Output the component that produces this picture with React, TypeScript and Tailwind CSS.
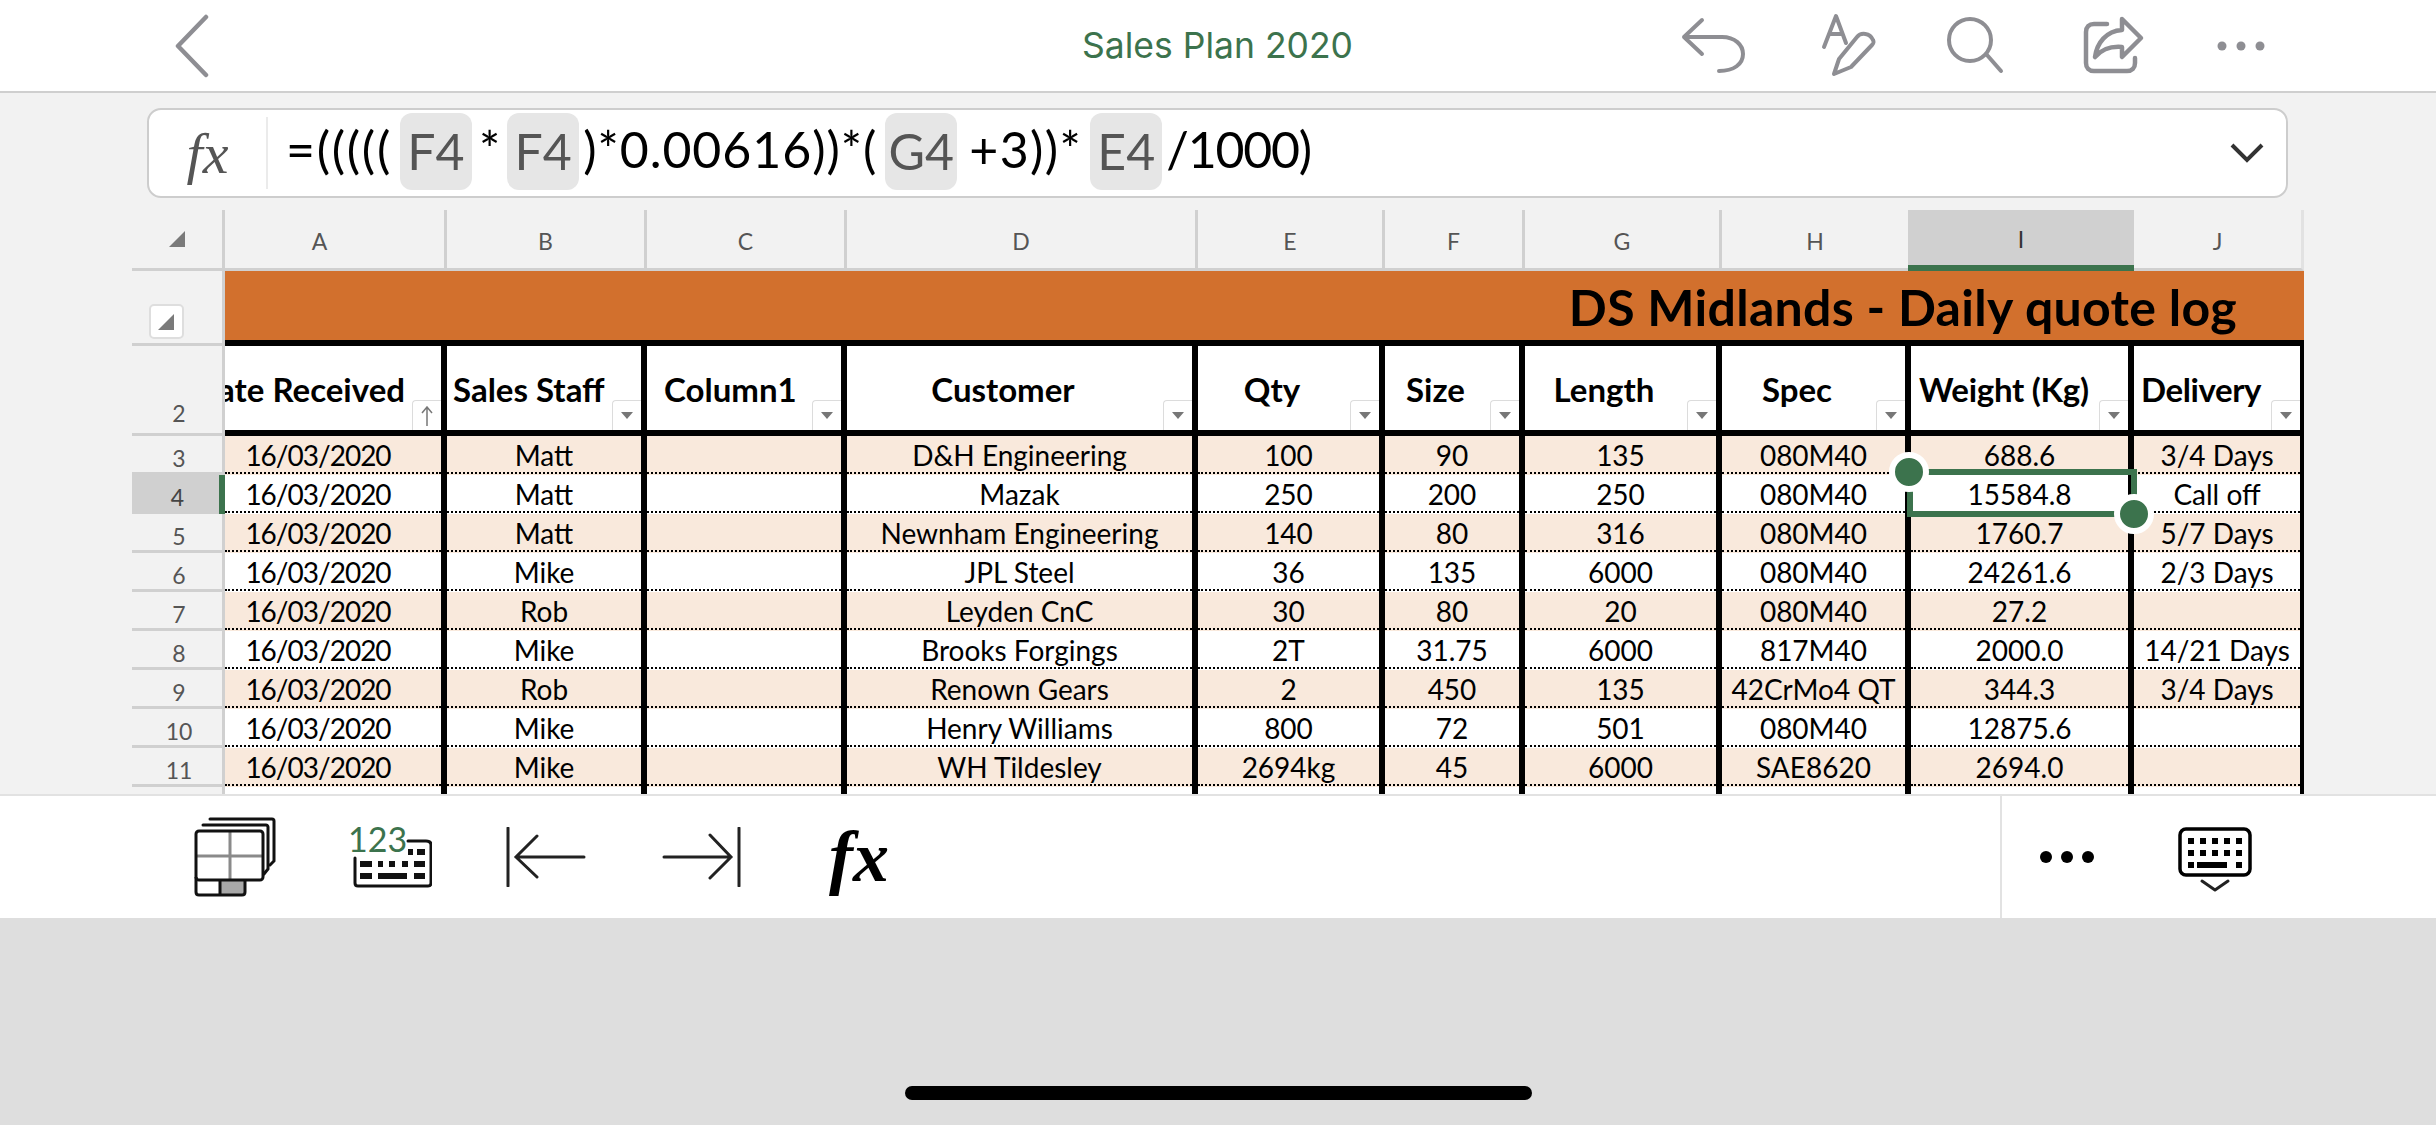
import React from 'react';

const GRID = 'grid grid-cols-[93px_222px_200px_200px_351px_187px_140px_197px_189px_223px_170px]';
const GREEN = '#3c734d';

const colLetters = ['A', 'B', 'C', 'D', 'E', 'F', 'G', 'H', 'I', 'J'];

const headers = [
    { label: 'Date Received', cls: 'justify-end pr-[36px]' },
    { label: 'Sales Staff', cls: 'justify-start pl-[6px]' },
    { label: 'Column1', cls: 'justify-start pl-[17px]' },
    { label: 'Customer', cls: 'justify-center pr-[33px]' },
    { label: 'Qty', cls: 'justify-center pr-[33px]' },
    { label: 'Size', cls: 'justify-center pr-[33px]' },
    { label: 'Length', cls: 'justify-center pr-[33px]' },
    { label: 'Spec', cls: 'justify-center pr-[33px]' },
    { label: 'Weight (Kg)', cls: 'justify-start pl-[8px] tracking-[-0.3px]' },
    { label: 'Delivery', cls: 'justify-start pl-[7px] tracking-[-0.4px]' },
];

const rows = [
    ['Matt', 'D&H Engineering', '100', '90', '135', '080M40', '688.6', '3/4 Days'],
    ['Matt', 'Mazak', '250', '200', '250', '080M40', '15584.8', 'Call off'],
    ['Matt', 'Newnham Engineering', '140', '80', '316', '080M40', '1760.7', '5/7 Days'],
    ['Mike', 'JPL Steel', '36', '135', '6000', '080M40', '24261.6', '2/3 Days'],
    ['Rob', 'Leyden CnC', '30', '80', '20', '080M40', '27.2', ''],
    ['Mike', 'Brooks Forgings', '2T', '31.75', '6000', '817M40', '2000.0', '14/21 Days'],
    ['Rob', 'Renown Gears', '2', '450', '135', '42CrMo4 QT', '344.3', '3/4 Days'],
    ['Mike', 'Henry Williams', '800', '72', '501', '080M40', '12875.6', ''],
    ['Mike', 'WH Tildesley', '2694kg', '45', '6000', 'SAE8620', '2694.0', ''],
    ['', '', '', '', '', '', '', ''],
];

const Corner = () => (
    <svg width="18" height="18" viewBox="0 0 18 18"><path d="M17 1V17H1Z" fill="#7a7a7a" /></svg>
);

const BackIcon = () => (
    <svg width="36" height="64" viewBox="0 0 36 64" fill="none" stroke="#8e8e93" strokeWidth="4.5" strokeLinecap="round" strokeLinejoin="round">
        <path d="M31 3 3 32 31 61" />
    </svg>
);

const UndoIcon = () => (
    <svg width="68" height="60" viewBox="0 0 68 60" fill="none" stroke="#8e8e93" strokeWidth="4" strokeLinecap="round" strokeLinejoin="round">
        <path d="M22 4 4 21 22 38M4 21H42C55 21 63 29 63 38C63 48 54 55 39 55" />
    </svg>
);

const FormatIcon = () => (
    <svg width="60" height="66" viewBox="0 0 60 66" fill="none" stroke="#8e8e93" strokeWidth="4" strokeLinecap="round" strokeLinejoin="round">
        <path d="M5 34 17 3 27 30M10 21H23" />
        <path d="M38 24C42 19 51 20 54 27C55 29 55 30 53 32L32 54L15 61L20 46Z" />
    </svg>
);

const SearchIcon = () => (
    <svg width="60" height="60" viewBox="0 0 60 60" fill="none" stroke="#8e8e93" strokeWidth="4" strokeLinecap="round">
        <circle cx="24" cy="24" r="21" />
        <path d="M41 39 55 55" />
    </svg>
);

const ShareIcon = () => (
    <svg width="68" height="62" viewBox="0 0 68 62" fill="none" stroke="#8e8e93" strokeWidth="4.5" strokeLinecap="round" strokeLinejoin="round">
        <path d="M27 9H14C9 9 6 12 6 17V48C6 53 9 56 14 56H47C52 56 55 53 55 48V43" />
        <path d="M42 15V4L61 23L42 42V32C30 31 22 34 15 42C17 28 26 16 42 15Z" />
    </svg>
);

const GrayDots = () => (
    <svg width="48" height="12" viewBox="0 0 48 12" fill="#8e8e93">
        <circle cx="5" cy="6" r="4.5" />
        <circle cx="24" cy="6" r="4.5" />
        <circle cx="43" cy="6" r="4.5" />
    </svg>
);

const SheetsIcon = () => (
    <svg width="82" height="80" viewBox="0 0 82 80" fill="none" stroke="#111" strokeWidth="3">
        <path d="M16 2H78C79.500 2 80 3 80 4V44L76 48" strokeLinecap="round" />
        <path d="M9 8H72C73 8 74 9 74 10V52L70 57" strokeLinecap="round" />
        <rect x="26" y="63" width="24" height="15" fill="#a8a8a8" stroke="none" />
        <path d="M36 14V62M2 39H69" stroke="#8a8a8a" />
        <rect x="2" y="14" width="67" height="49" rx="3" />
        <path d="M2 60V75C2 77 3 78 5 78H48C50 78 51 77 51 75V62M26 63V78" />
    </svg>
);

const NumKeyboardIcon = () => (
    <svg width="84" height="62" viewBox="0 0 84 62" fill="none">
        <text x="0" y="26" fontSize="34" fill={GREEN} style={{ fontFamily: 'Lato, sans-serif' }}>123</text>
        <path d="M60 15H78C81 15 83 16 83 19V57C83 59 82 60 80 60H10C8 60 7 59 7 57V32" stroke="#111" strokeWidth="3" strokeLinecap="round" />
        <g fill="#111">
            <rect x="60" y="23" width="5" height="6" />
            <rect x="69" y="23" width="8" height="6" />
            <rect x="12" y="35" width="12" height="6" />
            <rect x="30" y="35" width="5" height="6" />
            <rect x="41" y="35" width="6" height="6" />
            <rect x="54" y="35" width="6" height="6" />
            <rect x="66" y="35" width="11" height="6" />
            <rect x="12" y="47" width="12" height="6" />
            <rect x="30" y="47" width="29" height="6" />
            <rect x="66" y="47" width="11" height="6" />
        </g>
    </svg>
);

const TabBackIcon = () => (
    <svg width="80" height="60" viewBox="0 0 80 60" fill="none" stroke="#222" strokeWidth="3" strokeLinecap="round">
        <path d="M2 1V59M31 9 10 30 31 50M10 30H78" />
    </svg>
);

const TabForwardIcon = () => (
    <svg width="80" height="60" viewBox="0 0 80 60" fill="none" stroke="#222" strokeWidth="3" strokeLinecap="round">
        <path d="M77 1V59M48 8 69 30 48 51M69 30H2" />
    </svg>
);

const BlackDots = () => (
    <svg width="54" height="12" viewBox="0 0 54 12" fill="#000">
        <circle cx="6" cy="6" r="6" />
        <circle cx="27" cy="6" r="6" />
        <circle cx="48" cy="6" r="6" />
    </svg>
);

const HideKeyboardIcon = () => (
    <svg width="74" height="66" viewBox="0 0 74 66" fill="none">
        <rect x="2" y="2" width="70" height="46" rx="6" stroke="#000" strokeWidth="3.500" />
        <g fill="#000">
            <rect x="10" y="11" width="6" height="6" />
            <rect x="22" y="11" width="6" height="6" />
            <rect x="34" y="11" width="6" height="6" />
            <rect x="46" y="11" width="6" height="6" />
            <rect x="58" y="11" width="6" height="6" />
            <rect x="10" y="23" width="6" height="6" />
            <rect x="22" y="23" width="6" height="6" />
            <rect x="34" y="23" width="6" height="6" />
            <rect x="46" y="23" width="6" height="6" />
            <rect x="58" y="23" width="6" height="6" />
            <rect x="10" y="35" width="6" height="6" />
            <rect x="19" y="35" width="30" height="6" />
            <rect x="58" y="35" width="6" height="6" />
        </g>
        <path d="M24 54 37 63 50 54" stroke="#222" strokeWidth="3" strokeLinecap="round" strokeLinejoin="round" />
    </svg>
);

const Chip = ({ children }: { children: React.ReactNode }) => (
    <span className="w-[72px] h-[77px] mx-[8px] flex items-center justify-center rounded-[12px] bg-[#e6e6e6] text-[#555]">
        {children}
    </span>
);

const FilterButton = ({ sorted }: { sorted?: boolean }) => (
    <div className="absolute right-0 bottom-0 w-[29px] h-[30px] flex items-center justify-center bg-white border border-b-0 border-r-0 border-[#dcdcdc] rounded-tl-[4px]">
        {sorted ? (
            <svg width="14" height="20" viewBox="0 0 14 20" fill="none" stroke="#777" strokeWidth="1.500"><path d="M7 20V2M2 7 7 1 12 7" /></svg>
        ) : (
            <svg width="14" height="9" viewBox="0 0 14 9"><path d="M1 1H13L7 8Z" fill="#777" /></svg>
        )}
    </div>
);

export default function App() {
    return (
        <div className="w-[2436px] h-[1125px] flex flex-col overflow-hidden bg-[#f2f2f2] font-['Lato',sans-serif]">
            {/* Title bar */}
            <div className="h-[93px] shrink-0 flex items-center bg-white border-b-2 border-[#cfcfcf]">
                <div className="flex-1 pl-[175px]"><BackIcon /></div>
                <div className="mr-[5px] text-[35.500px] text-[#3c734d] font-['Inter',sans-serif]">Sales Plan 2020</div>
                <div className="flex-1 flex items-center justify-end pr-[171px]">
                    <UndoIcon />
                    <div className="ml-[71px]"><FormatIcon /></div>
                    <div className="ml-[67px]"><SearchIcon /></div>
                    <div className="ml-[74px]"><ShareIcon /></div>
                    <div className="ml-[69px]"><GrayDots /></div>
                </div>
            </div>

            {/* Formula bar */}
            <div className="shrink-0 pt-[15px] pb-[12px] pl-[147px] pr-[148px]">
                <div className="h-[90px] flex items-center bg-white border-2 border-[#cdcdcd] rounded-[14px] text-[50px] text-black">
                    <div className="w-[119px] h-[72px] flex items-center justify-center border-r-2 border-[#ebebeb] text-[#555] text-[58px] italic font-['Liberation_Serif',serif]">fx</div>
                    <div className="flex-1 flex items-center pl-[18px] pb-[3px] whitespace-nowrap">
                        <span className="pb-[4px] tracking-[1.7px]">=(((((</span>
                        <Chip>F4</Chip>
                        <span className="pb-[4px] -mx-[1px]">*</span>
                        <Chip>F4</Chip>
                        <span className="pb-[4px] -ml-[4px] tracking-[0.95px]">)*0.00616))*(</span>
                        <Chip>G4</Chip>
                        <span className="pb-[4px] ml-[4px] tracking-[1.4px]">+3))*</span>
                        <Chip>E4</Chip>
                        <span className="pb-[4px] -ml-[4px] tracking-[-1.2px]">/1000)</span>
                    </div>
                    <svg className="mr-[22px]" width="34" height="20" viewBox="0 0 34 20" fill="none" stroke="#333" strokeWidth="4"><path d="M2 2 17 17 32 2" /></svg>
                </div>
            </div>

            {/* Sheet */}
            <div className="relative h-[584px] shrink-0 ml-[132px] w-[2172px] overflow-hidden">
                <div className={`${GRID} h-[61px] text-[23px] text-[#555]`}>
                    <div className="flex items-center justify-center border-r-[3px] border-b-[3px] border-[#d0d0d0]"><Corner /></div>
                    {colLetters.map((c, i) => (
                        <div
                            key={c}
                            className={`relative flex items-center justify-center pt-[4px] ${i === 8 ? '-ml-[3px] bg-[#d0d0d0] border-b-[6px] border-[#3c734d] text-[#333]' : 'border-b-[3px] border-r-[3px] border-[#d0d0d0]'} ${i === 0 ? 'pr-[30px]' : ''} ${i === 9 ? 'border-r border-r-[#e2e2e2]' : ''}`}
                        >
                            {c}
                        </div>
                    ))}
                </div>

                {/* Row 1 */}
                <div className={`${GRID} h-[75px]`}>
                    <div className="flex items-end justify-center pb-[4px] border-r-[3px] border-b-[3px] border-[#d0d0d0]">
                        <div className="w-[35px] h-[35px] flex items-center justify-center bg-white border-2 border-[#dedede] rounded-[5px] mr-[22px]"><Corner /></div>
                    </div>
                    <div className="col-span-10 flex items-center justify-end pt-[2px] pr-[67px] bg-[#d2702d] border-b-[6px] border-black text-[50px] tracking-[0.3px] font-bold leading-none text-black">
                        DS Midlands - Daily quote log
                    </div>
                </div>

                {/* Row 2 */}
                <div className={`${GRID} h-[90px]`}>
                    <div className="flex items-end justify-center pb-[8px] pl-[4px] text-[23px] leading-none text-[#555] border-r-[3px] border-b-[3px] border-[#d0d0d0]">2</div>
                    {headers.map((h, i) => (
                        <div key={h.label} className={`relative flex items-center overflow-hidden pt-[4px] bg-white border-b-[6px] border-black text-[33px] font-bold text-black whitespace-nowrap ${i === 9 ? 'border-r-[4px]' : 'border-r-[6px]'} ${h.cls}`}>
                            {h.label}
                            <FilterButton sorted={i === 0} />
                        </div>
                    ))}
                </div>

                {/* Data rows */}
                {rows.map((r, ri) => {
                    const odd = ri % 2 === 0;
                    const selected = ri === 1;
                    return (
                        <div key={ri} className={`${GRID} h-[39px]`}>
                            <div className={`flex items-end justify-center pl-[4px] text-[23px] leading-none ${selected ? 'pb-[5px] bg-[#d0d0d0] border-r-[6px] border-r-[#3c734d] text-[#444]' : 'pb-[2px] border-r-[3px] border-b-[3px] border-b-[#d0d0d0] border-r-[#d0d0d0] text-[#555]'}`}>
                                {ri < 9 ? ri + 3 : ''}
                            </div>
                            <div className={`border-r-[6px] border-black ${odd ? 'bg-[#f9e9dc]' : 'bg-white'}`}>
                                <div className="h-[38px] flex items-center justify-center pt-[1px] pr-[30px] border-b-2 border-dotted border-black text-[28px] tracking-[-1px] leading-none text-black">
                                    {ri < 9 ? '16/03/2020' : ''}
                                </div>
                            </div>
                            {[r[0], '', ...r.slice(1)].map((cell, ci) => (
                                <div key={ci} className={`${ci === 8 ? 'border-r-[4px]' : 'border-r-[6px]'} border-black ${odd ? 'bg-[#f9e9dc]' : 'bg-white'}`}>
                                    <div className="h-[38px] flex items-center justify-center pt-[1px] whitespace-nowrap border-b-2 border-dotted border-black text-[28px] leading-none text-black">
                                        {cell}
                                    </div>
                                </div>
                            ))}
                        </div>
                    );
                })}

                {/* Selection */}
                <div className="absolute left-[1775px] top-[259px] w-[230px] h-[48px] border-[6px] border-[#3c734d]" />
                <div className="absolute left-[1757px] top-[242px] w-[40px] h-[40px] rounded-full bg-[#3c734d] border-[6px] border-white" />
                <div className="absolute left-[1982px] top-[284px] w-[40px] h-[40px] rounded-full bg-[#3c734d] border-[6px] border-white" />
            </div>

            {/* Bottom toolbar */}
            <div className="h-[124px] shrink-0 flex items-center bg-white border-t-2 border-[#e2e2e2] pl-[194px]">
                <SheetsIcon />
                <div className="ml-[72px]"><NumKeyboardIcon /></div>
                <div className="ml-[74px]"><TabBackIcon /></div>
                <div className="ml-[76px]"><TabForwardIcon /></div>
                <div className="ml-[87px] text-[72px] leading-none font-bold italic text-black font-['Liberation_Serif',serif]">fx</div>
                <div className="ml-auto w-[436px] h-full flex items-center border-l-2 border-[#e2e2e2]">
                    <div className="ml-[38px]"><BlackDots /></div>
                    <div className="ml-[84px] mt-[6px]"><HideKeyboardIcon /></div>
                </div>
            </div>

            {/* Keyboard area */}
            <div className="flex-1 flex items-end justify-center pb-[25px] bg-[#dedede]">
                <div className="w-[627px] h-[14px] rounded-full bg-black" />
            </div>
        </div>
    );
}
